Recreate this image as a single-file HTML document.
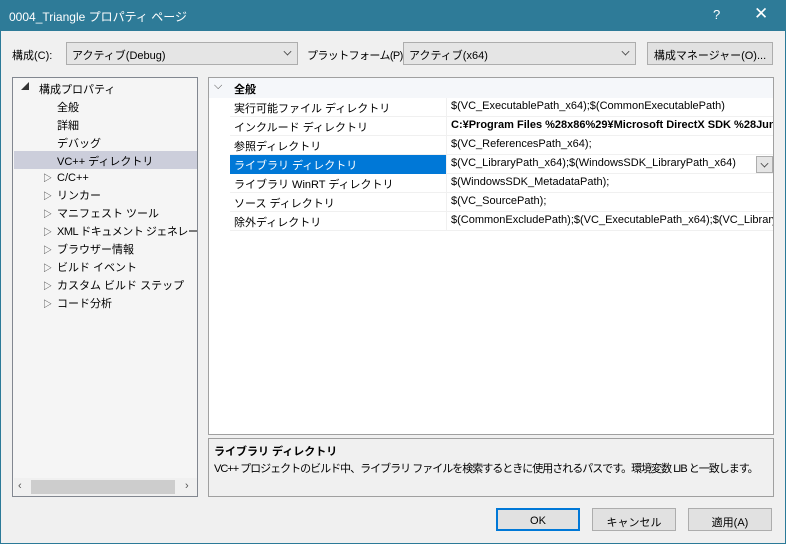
<!DOCTYPE html>
<html><head><meta charset="utf-8"><style>
*{margin:0;padding:0;box-sizing:border-box}
body{width:786px;height:544px;background:#f0f0f0;font-family:"Liberation Sans","Noto Sans CJK JP",sans-serif;font-size:11px;color:#000;position:relative;overflow:hidden}
.a{position:absolute;white-space:nowrap}
.win{position:absolute;left:0;top:0;width:786px;height:544px;border:1px solid #2b7a98}
.title{position:absolute;left:0;top:0;width:786px;height:31px;background:#2e7b98;color:#fff}
.combo{position:absolute;height:23px;background:#e5e5e5;border:1px solid #adadad;padding:4px 0 0 5px;white-space:nowrap}
.btn{position:absolute;height:23px;background:#e1e1e1;border:1px solid #adadad;text-align:center;padding-top:4px;white-space:nowrap}
.chev{position:absolute;right:6px;top:5px;width:7px;height:7px;border-right:1px solid #444;border-bottom:1px solid #444;transform:rotate(45deg) scale(.8)}
.tree{position:absolute;left:12px;top:77px;width:186px;height:420px;background:#f5f5f5;border:1px solid #828790;overflow:hidden}
.grid{position:absolute;left:208px;top:77px;width:566px;height:358px;background:#fff;border:1px solid #a0a0a0}
.row{position:absolute;left:21px;width:543px;height:19px;border-bottom:1px solid #f0f0f0}
.row .n{position:absolute;left:4px;top:2px;white-space:nowrap}
.row .v{position:absolute;left:216px;top:0;height:19px;padding:2px 0 0 4px;border-left:1px solid #f0f0f0;width:327px;overflow:hidden;white-space:nowrap}
</style></head><body>
<div class="win"></div>
<div class="title"><span class="a" style="left:9px;top:8px;font-size:12px">0004_Triangle プロパティ ページ</span><span class="a" style="left:713px;top:7px;font-size:13px">?</span><span class="a" style="left:754px;top:4px;font-size:17px">✕</span></div>
<span class="a" style="left:12px;top:47px">構成(C):</span>
<div class="combo" style="left:66px;top:42px;width:232px">アクティブ(Debug)<div class="chev"></div></div>
<span class="a" style="left:307px;top:47px;letter-spacing:-0.6px">プラットフォーム(P):</span>
<div class="combo" style="left:403px;top:42px;width:233px">アクティブ(x64)<div class="chev"></div></div>
<div class="btn" style="left:647px;top:42px;width:126px">構成マネージャー(O)...</div>

<div class="tree">
<span class="a" style="left:8px;top:3px;font-size:8px;color:#333">◢</span>
<span class="a" style="left:26px;top:3px">構成プロパティ</span>
<span class="a" style="left:44px;top:21px">全般</span>
<span class="a" style="left:44px;top:39px">詳細</span>
<span class="a" style="left:44px;top:57px">デバッグ</span>
<div class="a" style="left:1px;top:73px;width:183px;height:18px;background:#cccedb"></div>
<span class="a" style="left:44px;top:75px">VC++ ディレクトリ</span>
<div class="a" style="left:0;top:91px;width:184px;height:200px;line-height:18px">
<div style="padding-left:44px">C/C++</div>
<div style="padding-left:44px">リンカー</div>
<div style="padding-left:44px">マニフェスト ツール</div>
<div style="padding-left:44px;letter-spacing:-0.5px">XML ドキュメント ジェネレーター</div>
<div style="padding-left:44px">ブラウザー情報</div>
<div style="padding-left:44px">ビルド イベント</div>
<div style="padding-left:44px">カスタム ビルド ステップ</div>
<div style="padding-left:44px">コード分析</div>
</div>
<div class="a" style="left:30px;top:91px;line-height:18px;font-size:9px;color:#333">▷<br>▷<br>▷<br>▷<br>▷<br>▷<br>▷<br>▷</div>
<div class="a" style="left:1px;top:400px;width:184px;height:18px;background:#f0f0f0"></div>
<div class="a" style="left:18px;top:402px;width:144px;height:14px;background:#cdcdcd"></div>
<span class="a" style="left:5px;top:402px;color:#555">‹</span><span class="a" style="left:172px;top:402px;color:#555">›</span>
</div>

<div class="grid">
<div class="a" style="left:0;top:0;width:564px;height:20px;background:#f5f7fa"></div>
<span class="a" style="left:5px;top:2px;font-size:11px;color:#444">⌵</span>
<span class="a" style="left:25px;top:3px;font-weight:bold">全般</span>
<div class="row" style="top:20px"><span class="n">実行可能ファイル ディレクトリ</span><span class="v">$(VC_ExecutablePath_x64);$(CommonExecutablePath)</span></div>
<div class="row" style="top:39px"><span class="n">インクルード ディレクトリ</span><span class="v" style="font-weight:bold">C:¥Program Files %28x86%29¥Microsoft DirectX SDK %28June 2010%29</span></div>
<div class="row" style="top:58px"><span class="n">参照ディレクトリ</span><span class="v">$(VC_ReferencesPath_x64);</span></div>
<div class="row" style="top:77px"><div class="a" style="left:0;top:0;width:216px;height:19px;background:#0078d7"></div><span class="n" style="color:#fff">ライブラリ ディレクトリ</span><span class="v">$(VC_LibraryPath_x64);$(WindowsSDK_LibraryPath_x64)</span><div class="a" style="left:526px;top:1px;width:17px;height:17px;background:#e5e5e5;border:1px solid #adadad"><div class="chev" style="right:4px;top:3px"></div></div></div>
<div class="row" style="top:96px"><span class="n">ライブラリ WinRT ディレクトリ</span><span class="v">$(WindowsSDK_MetadataPath);</span></div>
<div class="row" style="top:115px"><span class="n">ソース ディレクトリ</span><span class="v">$(VC_SourcePath);</span></div>
<div class="row" style="top:134px"><span class="n">除外ディレクトリ</span><span class="v">$(CommonExcludePath);$(VC_ExecutablePath_x64);$(VC_LibraryPath_x64)</span></div>
</div>

<div class="a" style="left:208px;top:438px;width:566px;height:59px;border:1px solid #a0a0a0;background:#f0f0f0;overflow:hidden">
<span class="a" style="left:5px;top:4px;font-weight:bold">ライブラリ ディレクトリ</span>
<span class="a" style="left:5px;top:21px;letter-spacing:-1px">VC++ プロジェクトのビルド中、ライブラリ ファイルを検索するときに使用されるパスです。環境変数 LIB と一致します。</span>
</div>

<div class="btn" style="left:496px;top:508px;width:84px;border:2px solid #0078d7;padding-top:5px">OK</div>
<div class="btn" style="left:592px;top:508px;width:84px;padding-top:5px">キャンセル</div>
<div class="btn" style="left:688px;top:508px;width:84px;padding-top:5px">適用(A)</div>
</body></html>
